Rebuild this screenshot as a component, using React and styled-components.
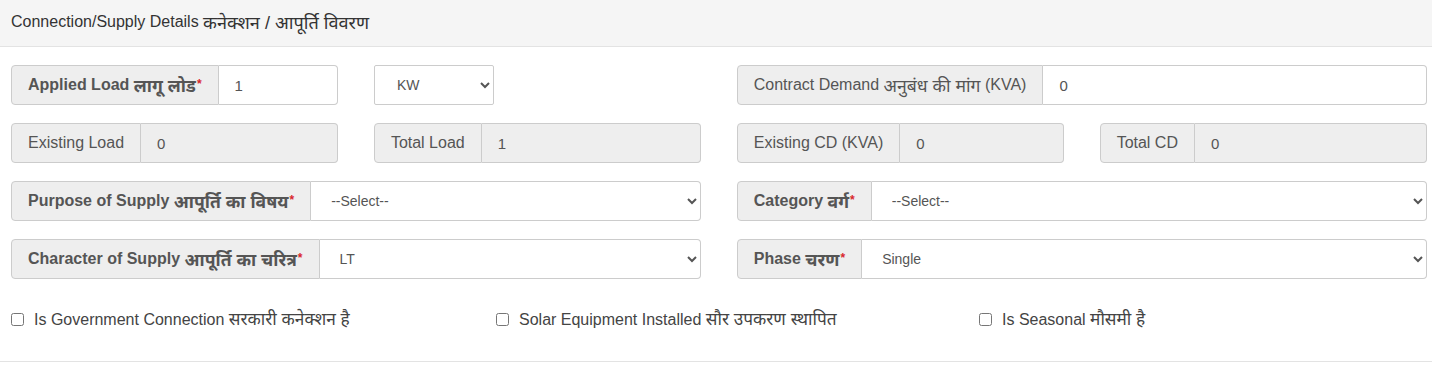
import React from "react";
import styled, { createGlobalStyle } from "styled-components";

const GlobalStyle = createGlobalStyle`
  html, body { margin: 0; padding: 0; background: #fff; }
  body {
    font-family: "Liberation Sans", Arial, "Noto Sans", sans-serif;
    font-size: 16px;
    color: #333;
  }
  * { box-sizing: border-box; }
`;

const Panel = styled.section`
  width: 1432px;
  border-bottom: 1px solid #e3e3e3;
  padding-bottom: 30px;
`;

const PanelHeading = styled.div`
  height: 47px;
  background: #f5f5f5;
  border-bottom: 1px solid #e3e3e3;
  padding: 0 11px 3px;
  display: flex;
  align-items: center;
  font-size: 16px;
  color: #333;
  white-space: pre;
`;

const Hi = styled.span`
  font-size: ${(p) => p.$size || "1.1em"};
`;

const PanelBody = styled.div`
  padding: 18px 5px 0 11px;
`;

const FieldGrid = styled.div`
  display: grid;
  grid-template-columns: repeat(4, 1fr);
  column-gap: 35.5px;
  row-gap: 18px;
`;

const Cell = styled.div`
  grid-column: span ${(p) => p.$span || 1};
  display: flex;
  min-width: 0;
`;

const InputGroup = styled.div`
  display: flex;
  width: 100%;
  height: 40px;
`;

const Addon = styled.span`
  display: flex;
  align-items: center;
  padding: 0 16px;
  white-space: pre;
  background: #eee;
  border: 1px solid #ccc;
  border-radius: 4px 0 0 4px;
  color: #555;
  font-size: 16px;
  font-weight: ${(p) => (p.$bold ? 700 : 400)};
`;

const Req = styled.span`
  color: #d9262c;
  font-size: 12px;
  font-weight: 700;
  align-self: flex-start;
  margin-top: 11px;
  margin-left: 1px;
`;

const TextInput = styled.input`
  flex: 1;
  min-width: 0;
  height: 40px;
  border: 1px solid #ccc;
  border-left: 0;
  border-radius: 0 4px 4px 0;
  padding: 0 16px;
  font-family: inherit;
  font-size: 15px;
  color: #555;
  background: ${(p) => (p.readOnly ? "#eee" : "#fff")};
  outline: none;
`;

const GroupSelect = styled.select`
  flex: 1;
  min-width: 0;
  height: 40px;
  border: 1px solid #ccc;
  border-left: 0;
  border-radius: 0 4px 4px 0;
  padding: 0 8px 0 16px;
  font-family: inherit;
  font-size: 14px;
  color: #555;
  background: #fff;
  outline: none;
`;

const UnitSelect = styled.select`
  width: 120px;
  height: 40px;
  border: 1px solid #ccc;
  border-radius: 2px;
  padding: 0 8px 0 18px;
  font-family: inherit;
  font-size: 14px;
  color: #555;
  background: #fff;
  outline: none;
`;

const CheckRow = styled.div`
  display: grid;
  grid-template-columns: 485px 483px 1fr;
  margin-top: 29px;
`;

const CheckLabel = styled.label`
  display: flex;
  align-items: center;
  gap: 8px;
  font-size: 16px;
  color: #444;
  line-height: 22px;
  white-space: pre;
`;

const CheckBox = styled.input`
  width: 13px;
  height: 13px;
  margin: 0 2px 0 0;
`;

function Field({ label, hindi, tail, bold, required, value, readOnly }) {
  return (
    <InputGroup>
      <Addon $bold={bold}>
        {label}
        {hindi && (
          <>
            {" "}
            <Hi>{hindi}</Hi>
          </>
        )}
        {tail}
        {required && <Req>*</Req>}
      </Addon>
      <TextInput defaultValue={value} readOnly={readOnly} />
    </InputGroup>
  );
}

function SelectField({ label, hindi, bold, required, options, value }) {
  return (
    <InputGroup>
      <Addon $bold={bold}>
        {label} <Hi>{hindi}</Hi>
        {required && <Req>*</Req>}
      </Addon>
      <GroupSelect defaultValue={value}>
        {options.map((o) => (
          <option key={o}>{o}</option>
        ))}
      </GroupSelect>
    </InputGroup>
  );
}

function Check({ label, hindi }) {
  return (
    <CheckLabel>
      <CheckBox type="checkbox" />
      <span>
        {label} <Hi $size="1.08em">{hindi}</Hi>
      </span>
    </CheckLabel>
  );
}

export default function App() {
  return (
    <>
      <GlobalStyle />
      <Panel>
        <PanelHeading>
          Connection/Supply Details <Hi $size="1.13em">कनेक्शन / आपूर्ति विवरण</Hi>
        </PanelHeading>
        <PanelBody>
          <FieldGrid>
            <Cell>
              <Field label="Applied Load" hindi="लागू लोड" bold required value="1" />
            </Cell>
            <Cell>
              <UnitSelect defaultValue="KW">
                <option>KW</option>
                <option>HP</option>
              </UnitSelect>
            </Cell>
            <Cell $span={2}>
              <Field label="Contract Demand" hindi="अनुबंध की मांग" tail=" (KVA)" value="0" />
            </Cell>

            <Cell>
              <Field label="Existing Load" value="0" readOnly />
            </Cell>
            <Cell>
              <Field label="Total Load" value="1" readOnly />
            </Cell>
            <Cell>
              <Field label="Existing CD (KVA)" value="0" readOnly />
            </Cell>
            <Cell>
              <Field label="Total CD" value="0" readOnly />
            </Cell>

            <Cell $span={2}>
              <SelectField
                label="Purpose of Supply"
                hindi="आपूर्ति का विषय"
                bold
                required
                options={["--Select--"]}
              />
            </Cell>
            <Cell $span={2}>
              <SelectField label="Category" hindi="वर्ग" bold required options={["--Select--"]} />
            </Cell>

            <Cell $span={2}>
              <SelectField
                label="Character of Supply"
                hindi="आपूर्ति का चरित्र"
                bold
                required
                options={["LT", "HT"]}
              />
            </Cell>
            <Cell $span={2}>
              <SelectField label="Phase" hindi="चरण" bold required options={["Single", "Three"]} />
            </Cell>
          </FieldGrid>

          <CheckRow>
            <Check label="Is Government Connection" hindi="सरकारी कनेक्शन है" />
            <Check label="Solar Equipment Installed" hindi="सौर उपकरण स्थापित" />
            <Check label="Is Seasonal" hindi="मौसमी है" />
          </CheckRow>
        </PanelBody>
      </Panel>
    </>
  );
}
